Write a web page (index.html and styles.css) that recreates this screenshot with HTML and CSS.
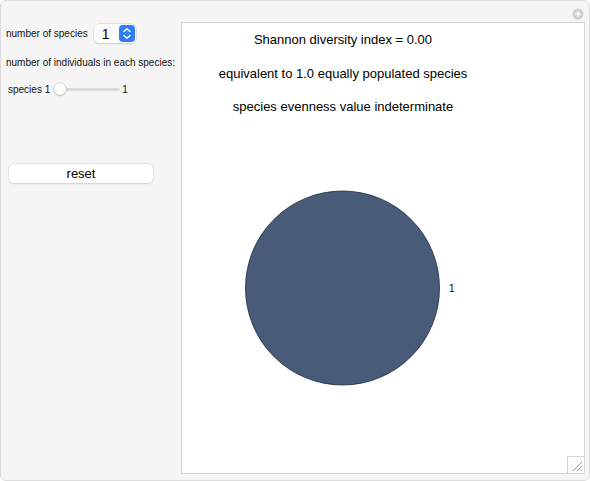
FILE: index.html
```html
<!DOCTYPE html>
<html lang="en">
<head>
    <meta charset="UTF-8">
    <meta name="viewport" content="width=device-width, initial-scale=1.0">
    <title>Shannon diversity index</title>
    <link rel="stylesheet" href="styles.css">
</head>
<body>
    <div class="app">
        <div class="controls">
            <div class="row">
                <span class="label">number of species</span>
                <div class="popup">
                    <span class="popup-value">1</span>
                    <span class="popup-arrows">
                        <svg width="16" height="17" viewBox="0 0 16 17">
                            <path d="M5 6.5 L8 3.8 L11 6.5" fill="none" stroke="#fff" stroke-width="1.5" stroke-linecap="round" stroke-linejoin="round"/>
                            <path d="M5 10.5 L8 13.2 L11 10.5" fill="none" stroke="#fff" stroke-width="1.5" stroke-linecap="round" stroke-linejoin="round"/>
                        </svg>
                    </span>
                </div>
            </div>
            <div class="heading">number of individuals in each species:</div>
            <div class="slider-row">
                <span class="label">species 1</span>
                <div class="slider">
                    <div class="track"></div>
                    <div class="knob"></div>
                </div>
                <span class="label">1</span>
            </div>
            <button class="reset">reset</button>
        </div>

        <div class="panel">
            <div class="lines">
                <div>Shannon diversity index = 0.00</div>
                <div>equivalent to 1.0 equally populated species</div>
                <div>species evenness value indeterminate</div>
            </div>
            <svg class="pie" width="402" height="340" viewBox="0 0 402 340">
                <circle cx="160.5" cy="164" r="97" fill="#485c7a" stroke="#1f2a3a" stroke-width="0.8"/>
                <text x="267" y="168" font-size="10" font-family="Liberation Sans, Arial, sans-serif" fill="#000">1</text>
            </svg>
            <div class="grip">
                <svg width="16" height="16" viewBox="0 0 16 16">
                    <path d="M5 14 L14 5 M9 14 L14 9 M12.5 14 L14 12.5" stroke="#999" stroke-width="1"/>
                </svg>
            </div>
        </div>

        <div class="plus">
            <svg width="12" height="12" viewBox="0 0 12 12">
                <circle cx="6" cy="6" r="5.5" fill="#cfcfcf"/>
                <path d="M6 3.2 V8.8 M3.2 6 H8.8" stroke="#fff" stroke-width="1.6"/>
            </svg>
        </div>
    </div>
</body>
</html>
```

FILE: styles.css
```css
* {
    box-sizing: border-box;
}

body {
    margin: 0;
    background: #ffffff;
    font-family: "Liberation Sans", Arial, sans-serif;
}

.app {
    position: relative;
    display: flex;
    width: 590px;
    height: 481px;
    background: #f5f5f5;
    border: 1px solid #dcdcdc;
    border-radius: 6px;
}

.controls {
    width: 180px;
    padding: 23px 0 0 5px;
    display: flex;
    flex-direction: column;
    align-items: flex-start;
}

.label {
    font-size: 10px;
    color: #111;
}

.row {
    display: flex;
    align-items: center;
    height: 19px;
}

.popup {
    display: flex;
    align-items: center;
    justify-content: space-between;
    margin-left: 6px;
    width: 42px;
    height: 19px;
    padding: 0 1px 0 8px;
    background: #fff;
    border-radius: 5px;
    box-shadow: 0 0 0 0.5px #d0d0d0, 0 1px 1.5px rgba(0, 0, 0, 0.15);
}

.popup-value {
    font-size: 14px;
    color: #000;
}

.popup-arrows {
    display: flex;
    width: 16px;
    height: 17px;
    background: #2f7ef6;
    border-radius: 4px;
}

.heading {
    margin-top: 14px;
    font-size: 10px;
    line-height: 12px;
    color: #111;
}

.slider-row {
    display: flex;
    align-items: center;
    height: 12px;
    margin-top: 14px;
    padding-left: 2px;
}

.slider {
    position: relative;
    width: 66px;
    height: 12px;
    margin: 0 2px 0 4px;
}

.track {
    position: absolute;
    left: 0;
    right: 0;
    top: 5px;
    height: 3px;
    border-radius: 2px;
    background: #dadada;
}

.knob {
    position: absolute;
    left: 0;
    top: 0;
    width: 12px;
    height: 12px;
    border-radius: 50%;
    background: #fff;
    box-shadow: 0 0 0 0.5px #b8b8b8, 0 1px 1.5px rgba(0, 0, 0, 0.25);
}

.reset {
    margin: 69px 0 0 3px;
    width: 144px;
    height: 19px;
    padding: 0;
    font-family: "Liberation Sans", Arial, sans-serif;
    font-size: 13px;
    color: #000;
    background: #fff;
    border: none;
    border-radius: 5px;
    box-shadow: 0 0 0 0.5px #d6d6d6, 0 1px 1.5px rgba(0, 0, 0, 0.15);
}

.panel {
    position: relative;
    margin-top: 21px;
    width: 404px;
    height: 452px;
    background: #fff;
    border: 1px solid #d4d4d4;
}

.lines {
    width: 322px;
    text-align: center;
    font-size: 13px;
    line-height: 33.5px;
    color: #000;
}

.pie {
    display: block;
}

.grip {
    position: absolute;
    right: 0;
    bottom: 0;
    width: 17px;
    height: 17px;
    border-left: 1px solid #d4d4d4;
    border-top: 1px solid #d4d4d4;
}

.grip svg {
    display: block;
}

.plus {
    position: absolute;
    top: 7px;
    right: 5px;
    width: 12px;
    height: 12px;
}

.plus svg {
    display: block;
}
```
